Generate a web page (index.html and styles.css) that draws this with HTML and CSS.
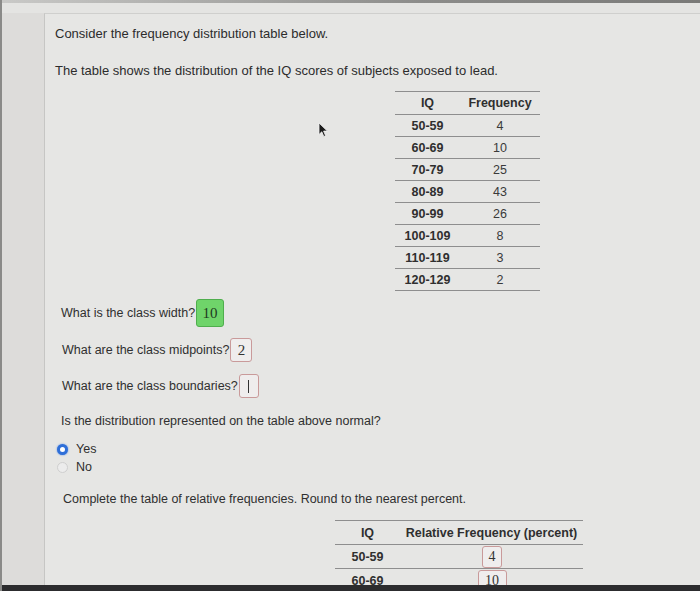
FILE: index.html
```html
<!DOCTYPE html>
<html>
<head>
<meta charset="utf-8">
<link rel="stylesheet" href="styles.css">
</head>
<body>
<div class="screen">
  <div class="topbar"></div>
  <div class="band"></div>
  <div class="main">
    <div class="gutter"></div>
    <div class="panel">
      <p class="intro first">Consider the frequency distribution table below.</p>
      <p class="intro second">The table shows the distribution of the IQ scores of subjects exposed to lead.</p>

      <table class="freq">
        <thead><tr><th class="iq">IQ</th><th class="fr">Frequency</th></tr></thead>
        <tbody>
          <tr><td class="iq">50-59</td><td class="fr">4</td></tr>
          <tr><td class="iq">60-69</td><td class="fr">10</td></tr>
          <tr><td class="iq">70-79</td><td class="fr">25</td></tr>
          <tr><td class="iq">80-89</td><td class="fr">43</td></tr>
          <tr><td class="iq">90-99</td><td class="fr">26</td></tr>
          <tr><td class="iq">100-109</td><td class="fr">8</td></tr>
          <tr><td class="iq">110-119</td><td class="fr">3</td></tr>
          <tr><td class="iq">120-129</td><td class="fr">2</td></tr>
        </tbody>
      </table>

      <div class="q q1">What is the class width?<span class="ans correct">10</span></div>
      <div class="q q2">What are the class midpoints?<span class="ans">2</span></div>
      <div class="q q3">What are the class boundaries?<span class="ans caret"><span class="bar"></span></span></div>
      <div class="q q4">Is the distribution represented on the table above normal?</div>

      <div class="radios">
        <div class="opt"><span class="radio on"></span>Yes</div>
        <div class="opt"><span class="radio"></span>No</div>
      </div>

      <div class="q q5">Complete the table of relative frequencies. Round to the nearest percent.</div>

      <table class="rel">
        <thead><tr><th class="iq">IQ</th><th class="rf">Relative Frequency (percent)</th></tr></thead>
        <tbody>
          <tr><td class="iq">50-59</td><td class="rf"><span class="ans small">4</span></td></tr>
          <tr><td class="iq">60-69</td><td class="rf"><span class="ans small wide">10</span></td></tr>
        </tbody>
      </table>

      <svg class="cursor" width="12" height="16" viewBox="0 0 12 16"><path d="M1 1 L1 12.5 L3.8 9.8 L5.8 14.5 L7.6 13.7 L5.6 9.1 L9.4 9.1 Z" fill="#1c1c1c" stroke="#f2f2f2" stroke-width="0.8"/></svg>
    </div>
  </div>
  <div class="bottombar"></div>
</div>
</body>
</html>
```

FILE: styles.css
```css
html, body {
  margin: 0;
  padding: 0;
}
body {
  font-family: "Liberation Sans", Arial, sans-serif;
  color: #2f2f2f;
  background: #dcdcda;
}
.screen {
  width: 700px;
  height: 591px;
  display: flex;
  flex-direction: column;
  overflow: hidden;
  background: #dedddb;
  border-left: 2px solid #8a8a88;
  box-sizing: border-box;
}
.topbar {
  height: 3px;
  background: linear-gradient(to right, #c9c9c7, #8c8c8a 60%, #7a7a78);
  flex: none;
}
.band {
  height: 10px;
  background: #e4e4e2;
  flex: none;
}
.main {
  flex: 1;
  display: flex;
  min-height: 0;
}
.gutter {
  width: 42px;
  flex: none;
  background: #dddcda;
}
.panel {
  position: relative;
  flex: 1;
  background: #e6e6e4;
  border-left: 1px solid #c6c6c4;
  border-top: 1px solid #cfcfcd;
  padding: 0 0 0 10px;
  overflow: hidden;
}
.bottombar {
  height: 6px;
  flex: none;
  background: #2c2c2e;
}
p { margin: 0; }
.intro {
  font-size: 13px;
  line-height: 16px;
  color: #2c2c2c;
}
.first { margin-top: 12px; }
.second { margin-top: 21px; }

table {
  border-collapse: collapse;
  font-size: 12.5px;
}
.freq {
  margin: 12px 0 0 340px;
}
.freq th, .freq td, .rel th, .rel td {
  border-bottom: 1.5px solid #8e8e8e;
  text-align: center;
  padding: 0;
  height: 21px;
}
.freq thead th {
  border-top: 1.5px solid #8e8e8e;
  height: 22px;
  font-weight: bold;
}
.freq .iq { width: 65px; font-weight: bold; }
.freq .fr { width: 80px; font-weight: normal; }
.freq th.fr { font-weight: bold; }
.freq td.fr { color: #3a3a3a; }

.q {
  font-size: 12.5px;
  display: flex;
  align-items: center;
  height: 28px;
}
.q1 { margin: 8px 0 0 6px; }
.q2 { margin: 11px 0 0 7px; height: 24px; }
.q3 { margin: 12px 0 0 7px; height: 24px; }
.q4 { margin: 15px 0 0 6px; height: 16px; }
.q5 { margin: 15px 0 0 8px; height: 16px; }

.ans {
  display: inline-flex;
  align-items: center;
  justify-content: center;
  box-sizing: border-box;
  margin-left: 1px;
  height: 24px;
  min-width: 22px;
  padding: 0 5px;
  border: 1.5px solid #c99a9a;
  border-radius: 3px;
  background: #efeded;
  font-family: "Liberation Serif", "Times New Roman", serif;
  font-size: 15px;
  color: #333;
}
.ans.correct {
  height: 28px;
  min-width: 28px;
  background: #6fd46a;
  border-color: #4fae4d;
  color: #1f3a1f;
}
.ans.caret { min-width: 20px; }
.bar {
  width: 1px;
  height: 13px;
  background: #333;
}

.radios {
  margin: 11px 0 0 2px;
  font-size: 12.5px;
}
.opt {
  display: flex;
  align-items: center;
  height: 18px;
}
.radio {
  width: 11px;
  height: 11px;
  box-sizing: border-box;
  border-radius: 50%;
  border: 1px solid #cfcfcf;
  background: #ececec;
  margin-right: 8px;
}
.radio.on {
  border: 3.5px solid #2f6fd8;
  background: #ffffff;
  box-shadow: 0 0 2px #5a8fe6;
}

.rel {
  margin: 13px 0 0 280px;
}
.rel thead th {
  border-top: 1.5px solid #8e8e8e;
  height: 23px;
  font-weight: bold;
}
.rel .iq { width: 65px; font-weight: bold; }
.rel .rf { width: 183px; }
.rel td { height: 23px; }
.ans.small {
  height: 22px;
  min-width: 20px;
  font-size: 14px;
}
.ans.wide { min-width: 29px; }

.cursor {
  position: absolute;
  left: 273px;
  top: 108px;
}
```
